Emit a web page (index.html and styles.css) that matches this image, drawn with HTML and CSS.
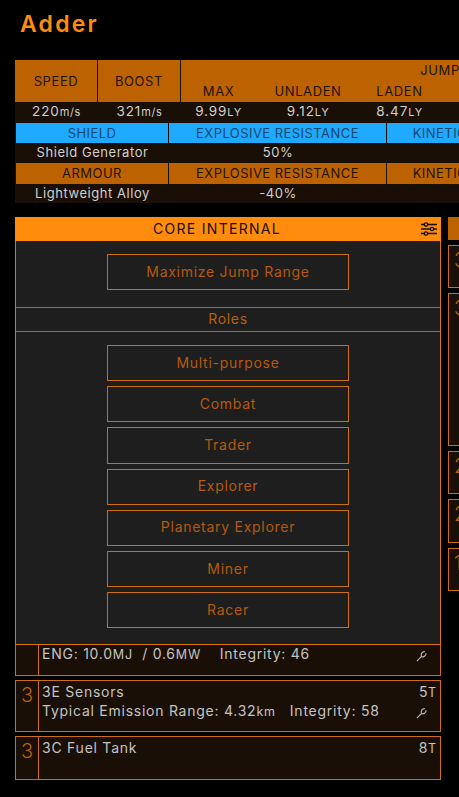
FILE: index.html
```html
<!DOCTYPE html>
<html lang="en">
<head>
<meta charset="utf-8">
<title>Adder</title>
<link rel="stylesheet" href="styles.css">
</head>
<body>
<div class="page">
  <h1 class="title">Adder</h1>

  <section class="summary">
    <div class="stats">
      <div class="hd speed">SPEED</div>
      <div class="hd boost">BOOST</div>
      <div class="hd jump-title">JUMP RANGE</div>
      <div class="hd sub max">MAX</div>
      <div class="hd sub unladen">UNLADEN</div>
      <div class="hd sub laden">LADEN</div>
      <div class="hd sub rest"></div>
      <div class="val">220<small>m/s</small></div>
      <div class="val">321<small>m/s</small></div>
      <div class="val max">9.99<small class="caps">LY</small></div>
      <div class="val">9.12<small class="caps">LY</small></div>
      <div class="val">8.47<small class="caps">LY</small></div>
      <div class="val"></div>
    </div>
    <div class="resist">
      <div class="rh blue">SHIELD</div>
      <div class="rh blue">EXPLOSIVE RESISTANCE</div>
      <div class="rh blue">KINETIC RESISTANCE</div>
      <div class="rv">Shield Generator</div>
      <div class="rv">50%</div>
      <div class="rv"></div>
      <div class="rh amber">ARMOUR</div>
      <div class="rh amber">EXPLOSIVE RESISTANCE</div>
      <div class="rh amber">KINETIC RESISTANCE</div>
      <div class="rv">Lightweight Alloy</div>
      <div class="rv">-40%</div>
      <div class="rv"></div>
    </div>
  </section>

  <main class="columns">
    <section class="core">
      <header class="cat-head active">
        <span>CORE INTERNAL</span>
        <svg class="tune" viewBox="0 0 16 14" aria-hidden="true">
          <path d="M0 2.5H16M0 7H16M0 11.5H16" stroke="#1a0f05" stroke-width="1.7" fill="none"/>
          <circle cx="5" cy="2.5" r="1.7" fill="#ff8c0d" stroke="#1a0f05" stroke-width="1.3"/>
          <circle cx="11" cy="7" r="1.7" fill="#ff8c0d" stroke="#1a0f05" stroke-width="1.3"/>
          <circle cx="5" cy="11.5" r="1.7" fill="#ff8c0d" stroke="#1a0f05" stroke-width="1.3"/>
        </svg>
      </header>

      <div class="menu">
        <div class="menu-top"><button class="btn">Maximize Jump Range</button></div>
        <div class="menu-label">Roles</div>
        <div class="menu-roles">
          <button class="btn">Multi-purpose</button>
          <button class="btn">Combat</button>
          <button class="btn">Trader</button>
          <button class="btn">Explorer</button>
          <button class="btn">Planetary Explorer</button>
          <button class="btn">Miner</button>
          <button class="btn">Racer</button>
        </div>
      </div>

      <div class="slots covered">
        <article class="slot">
          <div class="size"></div>
          <div class="info">
            <div class="row">&nbsp;</div>
            <div class="row"><span>ENG: 10.0<small class="caps">MJ</small> &nbsp;/ 0.6<small class="caps">MW</small>&nbsp;&nbsp;&nbsp;&nbsp;Integrity: 46</span>
              <svg class="wrench" viewBox="0 0 12 12" aria-hidden="true"><path d="M1 11.5 L6 6.3 M6 6.6 C4.8 3.6 7 .9 9.6 1.2 M6 6.6 C8 7.6 11 6 11 3" stroke="#bdbdbd" stroke-width="1.2" fill="none"/></svg>
            </div>
          </div>
        </article>
        <article class="slot">
          <div class="size">3</div>
          <div class="info">
            <div class="row"><span>3E Sensors</span><span class="mass">5<small class="caps">T</small></span></div>
            <div class="row"><span>Typical Emission Range: 4.32<small>km</small>&nbsp;&nbsp;&nbsp;Integrity: 58</span>
              <svg class="wrench" viewBox="0 0 12 12" aria-hidden="true"><path d="M1 11.5 L6 6.3 M6 6.6 C4.8 3.6 7 .9 9.6 1.2 M6 6.6 C8 7.6 11 6 11 3" stroke="#bdbdbd" stroke-width="1.2" fill="none"/></svg>
            </div>
          </div>
        </article>
        <article class="slot short">
          <div class="size">3</div>
          <div class="info">
            <div class="row"><span>3C Fuel Tank</span><span class="mass">8<small class="caps">T</small></span></div>
          </div>
        </article>
      </div>
    </section>

    <section class="optional">
      <header class="cat-head"></header>
      <div class="slots">
        <article class="slot h43"><div class="size">3</div></article>
        <article class="slot h153"><div class="size">3</div></article>
        <article class="slot h43"><div class="size">2</div></article>
        <article class="slot h44"><div class="size">2</div></article>
        <article class="slot h43"><div class="size">1</div></article>
      </div>
    </section>
  </main>
</div>
</body>
</html>
```
FILE: styles.css
```css
* { box-sizing: border-box; }
html, body { margin: 0; height: 100%; background: #000; }
body { overflow: hidden; font-family: Inter, "Liberation Sans", sans-serif; color: #c4c4c4; }
.page { width: 459px; height: 797px; overflow: hidden; padding: 10px 0 0 15px; }

.title { margin: 0 0 22px 5px; height: 28px; font-size: 23px; line-height: 28px; font-weight: 600; letter-spacing: 2.2px; color: #ff8c0d; }

.summary { width: 1100px; }
.stats { display: grid; grid-template-columns: 83px 83px 81px 92px 91px 650px; grid-template-rows: 21px 20.5px 21px; background: #1a0f06; }
.hd { background: #bd6200; color: #1f1206; font-size: 13px; line-height: 20px; text-align: center; letter-spacing: .6px; }
.speed, .boost { grid-row: 1 / 3; display: flex; align-items: center; justify-content: center; border-right: 1px solid #1a0f06; }
.jump-title { grid-column: 3 / 7; padding-right: 344px; }
.max { padding-right: 6px; }
.rest { background: #bd6200; }
.val { font-size: 13.5px; line-height: 19px; text-align: center; letter-spacing: .9px; color: #cfcfcf; }
.val small { font-size: 11px; letter-spacing: .6px; }

.resist { display: grid; grid-template-columns: 153px 218px 194px 500px; grid-template-rows: 20px 20px 21px 19px; padding-left: 1px; background: #1a0f06; }
.rh { font-size: 13px; line-height: 20px; text-align: center; letter-spacing: .45px; border-right: 1px solid #1a0f06; color: #1f1206; }
.rh.blue { background: #1fa9ff; color: #17496d; }
.rh.amber { background: #bd6200; line-height: 21px; }
.rv { font-size: 13px; line-height: 19px; text-align: center; letter-spacing: .55px; color: #cfcfcf; }
.resist .rv:nth-child(6n) { grid-column: 3 / 5; }
.resist .rh:nth-child(3), .resist .rh:nth-child(9) { grid-column: 3 / 5; padding-right: 500px; border-right: 0; }

.columns { display: flex; gap: 7px; width: 1100px; margin-top: 14.5px; }
.core, .optional { width: 426px; position: relative; flex: none; }

.cat-head { height: 24px; padding: 0 22px 1px 0; background: #bd6200; display: flex; align-items: center; justify-content: center; color: #1a0f05; font-size: 14px; letter-spacing: 1.3px; position: relative; }
.optional .cat-head { height: 23px; margin-bottom: 1px; }
.cat-head.active { background: #ff8c0d; }
.tune { position: absolute; right: 4px; top: 5px; width: 16px; height: 14px; }

.menu { position: absolute; left: 0; right: 0; top: 24px; height: 404px; background: #1e1e1e; border: 1px solid #d9780f; border-top: 0; z-index: 2; }
.menu-top { height: 66px; padding-top: 13px; display: flex; justify-content: center; }
.menu-label { height: 25px; border-top: 1px solid #c0660f; border-bottom: 1px solid #c0660f; text-align: center; font-size: 14px; line-height: 22px; letter-spacing: .65px; color: #b8600f; }
.menu-roles { display: flex; flex-direction: column; align-items: center; gap: 5px; padding-top: 13px; }
.btn { display: block; width: 242px; height: 36.2px; background: transparent; border: 1px solid #cb7012; color: #b35a10; font: inherit; font-size: 14px; letter-spacing: .72px; padding: 0 0 2px; }

.slots { display: flex; flex-direction: column; gap: 4.5px; padding-top: 3.5px; }
.slots.covered { padding-top: 383px; }
.slot { display: flex; height: 51.5px; border: 1px solid #cb7012; background: #1a0f06; flex: none; width: 426px; }
.slot.short { height: 44px; }
.slot.h43 { height: 43.5px; }
.slot.h44 { height: 44.5px; }
.slot.h153 { height: 153.5px; }
.size { width: 23px; flex: none; border-right: 1px solid #cb7012; color: #bd6200; font-size: 20px; font-weight: 300; line-height: 28px; padding-left: 5px; }
.optional .size { border-right: 0; }
.info { flex: 1; min-width: 0; padding: 2px 4px 0 3px; font-size: 14px; line-height: 18px; letter-spacing: .75px; color: #c4c4c4; }
.row { display: flex; justify-content: space-between; align-items: flex-start; }
.row small { font-size: 12.5px; letter-spacing: .8px; }
.mass { letter-spacing: .4px; }
.mass small { letter-spacing: 0; }
.wrench { width: 11px; height: 12px; margin: 5px 9px 0 0; flex: none; }
```
